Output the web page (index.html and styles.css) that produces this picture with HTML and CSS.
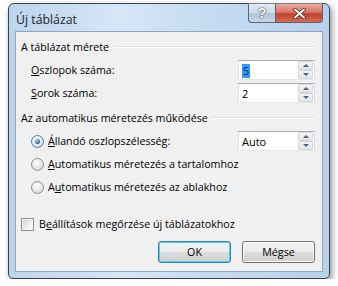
FILE: index.html
```html
<!DOCTYPE html>
<html lang="hu">
<head>
    <meta charset="UTF-8">
    <meta name="viewport" content="width=device-width, initial-scale=1.0">
    <title>Új táblázat</title>
    <link rel="stylesheet" href="styles.css">
</head>
<body>
    <div class="window">
        <div class="titlebar">
            <span class="title">Új táblázat</span>
            <div class="caption-buttons">
                <div class="cap-btn help">?</div>
                <div class="cap-btn close">
                    <svg width="13" height="11" viewBox="0 0 13 11">
                        <path d="M2 1.5 L11 9.5 M11 1.5 L2 9.5" stroke="#3d2020" stroke-width="3.4" stroke-linecap="round"/>
                        <path d="M2 1.5 L11 9.5 M11 1.5 L2 9.5" stroke="#ffffff" stroke-width="2" stroke-linecap="round"/>
                    </svg>
                </div>
            </div>
        </div>
        <div class="client">
            <div class="group-title"><span>A táblázat mérete</span><div class="sep"></div></div>

            <div class="field-row first">
                <label class="field-label"><u>O</u>szlopok száma:</label>
                <div class="spinner">
                    <span class="value"><span class="selected">5</span></span>
                    <div class="spin-btns"><div class="spin up"></div><div class="spin down"></div></div>
                </div>
            </div>
            <div class="field-row">
                <label class="field-label"><u>S</u>orok száma:</label>
                <div class="spinner">
                    <span class="value">2</span>
                    <div class="spin-btns"><div class="spin up"></div><div class="spin down"></div></div>
                </div>
            </div>

            <div class="group-title second"><span>Az automatikus méretezés működése</span><div class="sep"></div></div>

            <div class="field-row radio-row first">
                <label class="option"><span class="radio checked"></span><u>Á</u>llandó oszlopszélesség:</label>
                <div class="spinner">
                    <span class="value">Auto</span>
                    <div class="spin-btns"><div class="spin up"></div><div class="spin down"></div></div>
                </div>
            </div>
            <div class="field-row radio-row">
                <label class="option"><span class="radio"></span><u>A</u>utomatikus méretezés a tartalomhoz</label>
            </div>
            <div class="field-row radio-row">
                <label class="option"><span class="radio"></span>A<u>u</u>tomatikus méretezés az ablakhoz</label>
            </div>

            <div class="check-row">
                <label class="option"><span class="checkbox"></span>B<u>e</u>állítások megőrzése új táblázatokhoz</label>
            </div>

            <div class="button-row">
                <button class="btn default">OK</button>
                <button class="btn">Mégse</button>
            </div>
        </div>
    </div>
</body>
</html>
```

FILE: styles.css
```css
body {
    margin: 0;
    padding: 0;
    background-color: #ffffff;
    font-family: "Open Sans", "Liberation Sans", Arial, sans-serif;
    font-size: 10.7px;
    color: #000000;
}
.window {
    margin: 3px 0 0 8px;
    width: 320px;
    height: 274px;
    border: 1px solid #39414d;
    border-radius: 6px 6px 5px 5px;
    background: linear-gradient(to right, #bcd5ee 0%, #d6e7f7 35%, #c6dcf1 60%, #b7d1ec 100%);
    box-shadow: 2px 3px 6px rgba(0, 0, 0, 0.45);
    display: flex;
    flex-direction: column;
}
.titlebar {
    height: 27px;
    display: flex;
    justify-content: space-between;
    align-items: flex-start;
}
.title {
    margin: 7px 0 0 7px;
    font-size: 12.3px;
    color: #1e1e1e;
}
.caption-buttons {
    display: flex;
    margin-right: 6px;
    margin-top: -1px;
}
.cap-btn {
    height: 18px;
    border: 1px solid #5b6470;
    border-top-color: #7d8590;
    display: flex;
    align-items: center;
    justify-content: center;
}
.help {
    width: 26px;
    border-right: none;
    border-radius: 0 0 0 4px;
    background: linear-gradient(to bottom, #e3eaf3 0%, #cfdbe8 45%, #b4c4d8 55%, #c9d7e6 100%);
    color: #ffffff;
    font-family: "Liberation Sans", Arial, sans-serif;
    font-size: 14px;
    font-weight: bold;
    text-shadow: 0 0 2px #37485c, 0 0 1px #37485c;
}
.close {
    width: 46px;
    border-radius: 0 0 4px 0;
    background: linear-gradient(to bottom, #e8a89c 0%, #d9786a 45%, #c2412f 55%, #d66a4f 100%);
}
.client {
    flex: 1;
    margin: 0 6px 6px 6px;
    border: 1px solid #8ea4bf;
    background-color: #f0f0f0;
    padding: 0 7px 0 5px;
    display: flex;
    flex-direction: column;
}
.group-title {
    height: 15px;
    margin-top: 7px;
    display: flex;
    align-items: center;
}
.group-title.second {
    margin-top: 7px;
}
.sep {
    flex: 1;
    height: 0;
    border-top: 1px solid #d5dfe5;
    border-bottom: 1px solid #ffffff;
    margin-left: 4px;
    margin-top: 1px;
}
.field-row {
    height: 20px;
    margin-top: 3px;
    display: flex;
    align-items: center;
    justify-content: space-between;
}
.field-row.first {
    margin-top: 6px;
}
.field-label {
    margin-left: 10px;
}
.spinner {
    width: 75px;
    height: 18px;
    border: 1px solid #b5b8c0;
    border-top-color: #abadb3;
    border-left-color: #e2e3ea;
    border-right-color: #dbdfe6;
    border-bottom-color: #e3e9ef;
    background-color: #ffffff;
    display: flex;
    align-items: center;
    justify-content: space-between;
}
.value {
    margin-left: 3px;
    font-size: 11px;
}
.selected {
    display: inline-block;
    background-color: #3399ff;
    color: #0c1f4a;
    line-height: 14px;
    padding: 0 1px;
}
.spin-btns {
    width: 15px;
    height: 18px;
    display: flex;
    flex-direction: column;
    margin-right: 1px;
}
.spin {
    flex: 1;
    border: 1px solid #d2d5d9;
    border-radius: 2px;
    background: linear-gradient(to bottom, #f6f6f6, #e3e4e6);
    display: flex;
    align-items: center;
    justify-content: center;
}
.spin.up::after {
    content: "";
    border-left: 3px solid transparent;
    border-right: 3px solid transparent;
    border-bottom: 3px solid #4d6185;
}
.spin.down::after {
    content: "";
    border-left: 3px solid transparent;
    border-right: 3px solid transparent;
    border-top: 3px solid #4d6185;
}
.option {
    display: flex;
    align-items: center;
}
.radio-row .option {
    margin-left: 10px;
}
.radio {
    width: 11px;
    height: 11px;
    border: 1px solid #8e8f8f;
    border-radius: 50%;
    background: radial-gradient(circle at 40% 35%, #ffffff 0%, #e6e6e6 55%, #c9c9c9 100%);
    margin-right: 4px;
    display: flex;
    align-items: center;
    justify-content: center;
}
.radio.checked {
    border-color: #3c7fb1;
}
.radio.checked::after {
    content: "";
    width: 5px;
    height: 5px;
    border-radius: 50%;
    background: radial-gradient(circle at 40% 35%, #a9d5f5 0%, #2d6fae 60%, #174b87 100%);
}
.check-row {
    height: 20px;
    margin-top: 17px;
    display: flex;
    align-items: center;
}
.checkbox {
    width: 11px;
    height: 11px;
    border: 1px solid #8e8f8f;
    background: linear-gradient(135deg, #cfcfcf 0%, #efefef 60%, #ffffff 100%);
    box-shadow: inset 0 0 0 1px #f4f4f4;
    margin-right: 5px;
}
.button-row {
    margin-top: 7px;
    display: flex;
    justify-content: flex-end;
    gap: 11px;
}
.btn {
    width: 73px;
    height: 22px;
    padding: 0;
    border: 1px solid #707070;
    border-radius: 3px;
    background: linear-gradient(to bottom, #f2f2f2 0%, #ebebeb 50%, #dddddd 50%, #cfcfcf 100%);
    box-shadow: inset 0 0 0 1px #fbfbfb;
    font-family: "Open Sans", "Liberation Sans", Arial, sans-serif;
    font-size: 10.7px;
    color: #000000;
}
.btn.default {
    border-color: #3c7fb1;
    box-shadow: inset 0 0 0 1px #48d0f6;
}
```
